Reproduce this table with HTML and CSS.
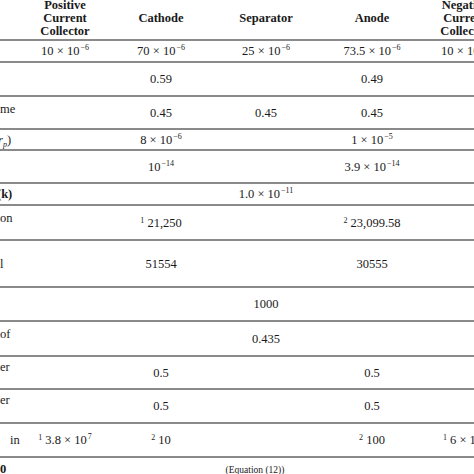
FILE: index.html
```html
<!DOCTYPE html>
<html>
<head>
<meta charset="utf-8">
<link rel="stylesheet" href="styles.css">
</head>
<body>
<div class="page">
  <div class="table">
    <div class="row head">
      <div class="cell lab"></div>
      <div class="cell"><span>Positive<br>Current<br>Collector</span></div>
      <div class="cell"><span>Cathode</span></div>
      <div class="cell"><span>Separator</span></div>
      <div class="cell"><span>Anode</span></div>
      <div class="cell"><span>Negative<br>Current<br>Collector</span></div>
    </div>
    <div class="row h22">
      <div class="cell lab"></div>
      <div class="cell"><span>10 × 10<sup>−6</sup></span></div>
      <div class="cell"><span>70 × 10<sup>−6</sup></span></div>
      <div class="cell"><span>25 × 10<sup>−6</sup></span></div>
      <div class="cell"><span>73.5 × 10<sup>−6</sup></span></div>
      <div class="cell"><span>10 × 10<sup>−6</sup></span></div>
    </div>
    <div class="row h34">
      <div class="cell lab"></div>
      <div class="cell"></div>
      <div class="cell"><span>0.59</span></div>
      <div class="cell"></div>
      <div class="cell"><span>0.49</span></div>
      <div class="cell"></div>
    </div>
    <div class="row h33">
      <div class="cell lab top"><span>me</span></div>
      <div class="cell"></div>
      <div class="cell"><span>0.45</span></div>
      <div class="cell"><span>0.45</span></div>
      <div class="cell"><span>0.45</span></div>
      <div class="cell"></div>
    </div>
    <div class="row h21">
      <div class="cell lab"><span class="clip-r"><i>r<sub>p</sub></i>)</span></div>
      <div class="cell"></div>
      <div class="cell"><span>8 × 10<sup>−6</sup></span></div>
      <div class="cell"></div>
      <div class="cell"><span>1 × 10<sup>−5</sup></span></div>
      <div class="cell"></div>
    </div>
    <div class="row h33">
      <div class="cell lab"></div>
      <div class="cell"></div>
      <div class="cell"><span>10<sup>−14</sup></span></div>
      <div class="cell"></div>
      <div class="cell"><span>3.9 × 10<sup>−14</sup></span></div>
      <div class="cell"></div>
    </div>
    <div class="row h22">
      <div class="cell lab"><span class="clip"><b>(k)</b></span></div>
      <div class="cell"></div>
      <div class="cell"></div>
      <div class="cell"><span>1.0 × 10<sup>−11</sup></span></div>
      <div class="cell"></div>
      <div class="cell"></div>
    </div>
    <div class="row h35">
      <div class="cell lab top"><span>on</span></div>
      <div class="cell"></div>
      <div class="cell"><span><sup class="n">1</sup> 21,250</span></div>
      <div class="cell"></div>
      <div class="cell"><span><sup class="n">2</sup> 23,099.58</span></div>
      <div class="cell"></div>
    </div>
    <div class="row h47">
      <div class="cell lab"><span>l</span></div>
      <div class="cell"></div>
      <div class="cell"><span>51554</span></div>
      <div class="cell"></div>
      <div class="cell"><span>30555</span></div>
      <div class="cell"></div>
    </div>
    <div class="row h34">
      <div class="cell lab"></div>
      <div class="cell"></div>
      <div class="cell"></div>
      <div class="cell"><span>1000</span></div>
      <div class="cell"></div>
      <div class="cell"></div>
    </div>
    <div class="row h35">
      <div class="cell lab top"><span>of</span></div>
      <div class="cell"></div>
      <div class="cell"></div>
      <div class="cell"><span>0.435</span></div>
      <div class="cell"></div>
      <div class="cell"></div>
    </div>
    <div class="row h33">
      <div class="cell lab top t2"><span>er</span></div>
      <div class="cell"></div>
      <div class="cell"><span>0.5</span></div>
      <div class="cell"></div>
      <div class="cell"><span>0.5</span></div>
      <div class="cell"></div>
    </div>
    <div class="row h34">
      <div class="cell lab top t2"><span>er</span></div>
      <div class="cell"></div>
      <div class="cell"><span>0.5</span></div>
      <div class="cell"></div>
      <div class="cell"><span>0.5</span></div>
      <div class="cell"></div>
    </div>
    <div class="row h34">
      <div class="cell lab ind"><span>in</span></div>
      <div class="cell"><span><sup class="n">1</sup> 3.8 × 10<sup>7</sup></span></div>
      <div class="cell"><span><sup class="n">2</sup> 10</span></div>
      <div class="cell"></div>
      <div class="cell"><span><sup class="n">2</sup> 100</span></div>
      <div class="cell"><span><sup class="n">1</sup> 6 × 10<sup>7</sup></span></div>
    </div>
    <div class="row last">
      <div class="cell lab"><span><b>0</b></span></div>
      <div class="cell"></div>
      <div class="cell"></div>
      <div class="cell eq"><span>(Equation (12))</span></div>
      <div class="cell"></div>
      <div class="cell"></div>
    </div>
  </div>
</div>
</body>
</html>
```

FILE: styles.css
```css
html, body {
  margin: 0;
  padding: 0;
  background: #ffffff;
}

body {
  width: 474px;
  height: 474px;
  overflow: hidden;
  font-family: "Liberation Serif", "Times New Roman", serif;
  font-size: 12.5px;
  color: #1a1a1a;
}

.page {
  width: 474px;
  overflow: hidden;
}

.table {
  width: 500px;
  margin-top: -2px;
}

.row {
  display: grid;
  grid-template-columns: 30px 70px 122px 88px 124px 62px;
  box-sizing: border-box;
  border-bottom: 2px solid #8a8a8a;
}

.row.head {
  height: 43px;
  font-weight: bold;
  line-height: 13px;
}

.row.h21 { height: 21px; }
.row.h22 { height: 22px; }
.row.h33 { height: 33px; }
.row.h34 { height: 34px; }
.row.h35 { height: 35px; }
.row.h47 { height: 47px; }
.row.last {
  height: 22px;
  border-bottom: none;
}

.cell {
  display: flex;
  align-items: center;
  justify-content: center;
  text-align: center;
  white-space: nowrap;
  margin-top: 1px;
}

.head .cell {
  margin-top: 0;
}

.cell.lab {
  justify-content: flex-start;
  text-align: left;
}

.cell.lab.top {
  align-items: flex-start;
  padding-top: 4px;
}

.cell.lab.top.t2 {
  padding-top: 2px;
}

.cell.lab.ind {
  padding-left: 10px;
}

.clip {
  margin-left: -3px;
}

.clip-r {
  margin-left: -2px;
}

.cell.eq {
  font-size: 9.5px;
  padding-right: 22px;
  margin-top: 2px;
}

sup {
  font-size: 8px;
  line-height: 0;
  vertical-align: 5px;
  margin-left: 1px;
}

sup.n {
  margin-left: 0;
  vertical-align: 4px;
}

sub {
  font-size: 8px;
  line-height: 0;
  vertical-align: -3px;
}
```
